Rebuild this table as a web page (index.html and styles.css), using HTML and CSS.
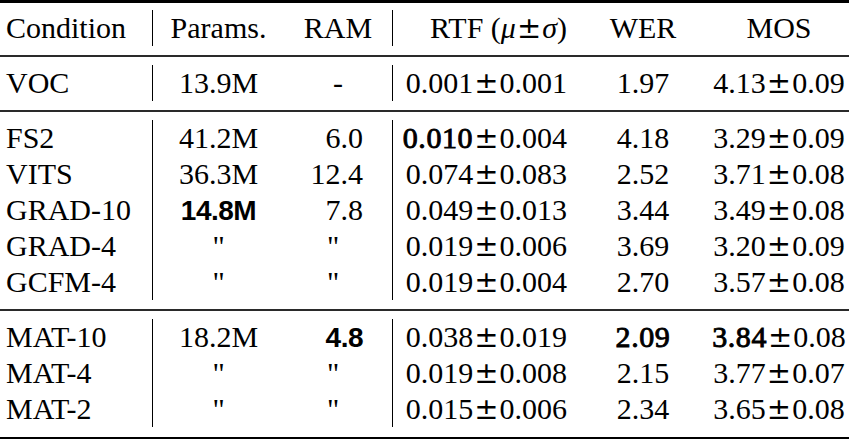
FILE: index.html
```html
<!DOCTYPE html>
<html>
<head>
<meta charset="utf-8">
<link rel="stylesheet" href="styles.css">
</head>
<body>
<div class="table">
  <div class="rule thick"></div>
  <div class="sec head">
    <div class="row">
      <div class="c1">Condition</div>
      <div class="c2">Params.</div>
      <div class="c3 ctr">RAM</div>
      <div class="c4">RTF (<i>μ</i><span class="pm">±</span><i>σ</i>)</div>
      <div class="c5">WER</div>
      <div class="c6">MOS</div>
    </div>
  </div>
  <div class="rule"></div>
  <div class="sec">
    <div class="row">
      <div class="c1">VOC</div>
      <div class="c2">13.9M</div>
      <div class="c3 ctr">-</div>
      <div class="c4">0.001<span class="pm">±</span>0.001</div>
      <div class="c5">1.97</div>
      <div class="c6">4.13<span class="pm">±</span>0.09</div>
    </div>
  </div>
  <div class="rule"></div>
  <div class="sec">
    <div class="row">
      <div class="c1">FS2</div>
      <div class="c2">41.2M</div>
      <div class="c3">6.0</div>
      <div class="c4"><b>0.010</b><span class="pm">±</span>0.004</div>
      <div class="c5">4.18</div>
      <div class="c6">3.29<span class="pm">±</span>0.09</div>
    </div>
    <div class="row">
      <div class="c1">VITS</div>
      <div class="c2">36.3M</div>
      <div class="c3">12.4</div>
      <div class="c4">0.074<span class="pm">±</span>0.083</div>
      <div class="c5">2.52</div>
      <div class="c6">3.71<span class="pm">±</span>0.08</div>
    </div>
    <div class="row">
      <div class="c1">GRAD-10</div>
      <div class="c2"><b class="sf">14.8M</b></div>
      <div class="c3">7.8</div>
      <div class="c4">0.049<span class="pm">±</span>0.013</div>
      <div class="c5">3.44</div>
      <div class="c6">3.49<span class="pm">±</span>0.08</div>
    </div>
    <div class="row">
      <div class="c1">GRAD-4</div>
      <div class="c2 ditto">"</div>
      <div class="c3 ditto">"</div>
      <div class="c4">0.019<span class="pm">±</span>0.006</div>
      <div class="c5">3.69</div>
      <div class="c6">3.20<span class="pm">±</span>0.09</div>
    </div>
    <div class="row">
      <div class="c1">GCFM-4</div>
      <div class="c2 ditto">"</div>
      <div class="c3 ditto">"</div>
      <div class="c4">0.019<span class="pm">±</span>0.004</div>
      <div class="c5">2.70</div>
      <div class="c6">3.57<span class="pm">±</span>0.08</div>
    </div>
  </div>
  <div class="rule"></div>
  <div class="sec last">
    <div class="row">
      <div class="c1">MAT-10</div>
      <div class="c2">18.2M</div>
      <div class="c3"><b class="sf">4.8</b></div>
      <div class="c4">0.038<span class="pm">±</span>0.019</div>
      <div class="c5"><b>2.09</b></div>
      <div class="c6"><b>3.84</b><span class="pm">±</span>0.08</div>
    </div>
    <div class="row">
      <div class="c1">MAT-4</div>
      <div class="c2 ditto">"</div>
      <div class="c3 ditto">"</div>
      <div class="c4">0.019<span class="pm">±</span>0.008</div>
      <div class="c5">2.15</div>
      <div class="c6">3.77<span class="pm">±</span>0.07</div>
    </div>
    <div class="row">
      <div class="c1">MAT-2</div>
      <div class="c2 ditto">"</div>
      <div class="c3 ditto">"</div>
      <div class="c4">0.015<span class="pm">±</span>0.006</div>
      <div class="c5">2.34</div>
      <div class="c6">3.65<span class="pm">±</span>0.08</div>
    </div>
  </div>
  <div class="rule thick"></div>
</div>
</body>
</html>
```
FILE: styles.css
```css
* { box-sizing: border-box; }
html, body { margin: 0; padding: 0; background: #fff; }
body {
  font-family: "Liberation Serif", "Times New Roman", serif;
  font-size: 30px;
  color: #000;
  width: 849px;
  overflow: hidden;
}
.table { width: 849px; }
.rule { height: 2px; background: #2a2a2a; }
.rule.thick { height: 3px; background: #000; }
.sec { padding: 7px 0 9px; }
.sec + .rule + .sec { padding-top: 8px; }
.sec.head { padding: 7px 0 9px; }
.sec.last { padding-bottom: 10px; }
.row {
  display: grid;
  grid-template-columns: 152px 132px 108px 183px 136px 136px;
  height: 36px;
  line-height: 36px;
  white-space: nowrap;
}
.c1 { padding-left: 6px; }
.c2 { border-left: 1px solid #000; text-align: center; }
.c3 { text-align: right; padding-right: 29px; }
.c3.ctr { text-align: center; padding-right: 0; }
.c3.ditto { text-align: center; padding-right: 10px; }
.c4 { border-left: 1px solid #000; text-align: right; padding-right: 8px; }
.c5 { text-align: center; }
.c6 { text-align: center; }
.pm {
  font-family: "DejaVu Serif", serif;
  font-size: 29px;
  margin: 0 1px;
}
b {
  font-weight: normal;
  -webkit-text-stroke: 0.9px #000;
  letter-spacing: 0.6px;
}
b.sf {
  font-family: "Liberation Sans", Arial, sans-serif;
  font-weight: bold;
  -webkit-text-stroke: 0;
  font-size: 28px;
  letter-spacing: -0.5px;
}
i { font-style: italic; }
```
